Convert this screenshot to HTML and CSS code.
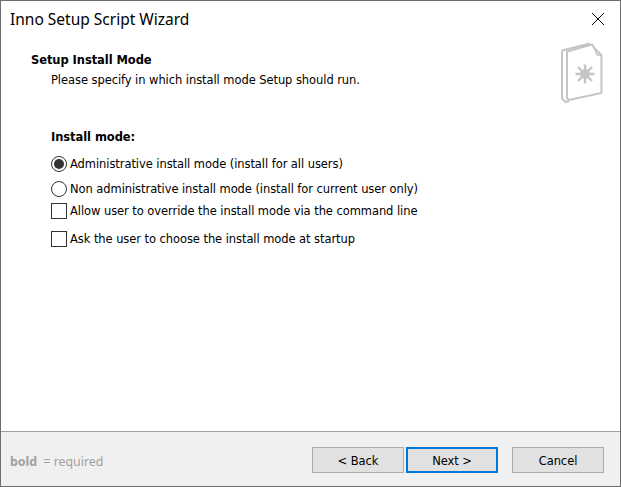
FILE: index.html
```html
<!DOCTYPE html>
<html lang="en">
<head>
    <meta charset="UTF-8">
    <title>Inno Setup Script Wizard</title>
    <link rel="stylesheet" href="styles.css">
</head>
<body>
    <div class="window">
        <div class="titlebar">
            <span class="title">Inno Setup Script Wizard</span>
            <svg class="close" width="14" height="14" viewBox="0 0 14 14"><path d="M1 1L13 13M13 1L1 13" stroke="#000" stroke-width="1" fill="none"/></svg>
        </div>

        <div class="header">
            <div class="header-text">
                <h1>Setup Install Mode</h1>
                <p>Please specify in which install mode Setup should run.</p>
            </div>
            <svg class="logo" width="42" height="62" viewBox="0 0 42 62" fill="none" stroke="#c4c4c4" stroke-width="2">
                <path d="M1 9.500V57.500L4.500 61L8 60"/>
                <path d="M1 9.500L29 2.500"/>
                <path d="M6 10.500L31 3.500L34 8L40.500 14V52L8 59L6 57Z"/>
                <path d="M34 8L36 14H40.500" stroke-width="1.500"/>
                <path d="M24 23.500V42.500M14.500 33H33.500M17 26L31 40M31 26L17 40" stroke-width="2.400"/>
                <circle cx="24" cy="33" r="5" fill="#c4c4c4" stroke="none"/>
            </svg>
        </div>

        <div class="content">
            <div class="group-label">Install mode:</div>
            <label class="opt opt-first"><span class="radio checked"></span>Administrative install mode (install for all users)</label>
            <label class="opt"><span class="radio"></span>Non administrative install mode (install for current user only)</label>
            <label class="opt opt-tight"><span class="check"></span>Allow user to override the install mode via the command line</label>
            <label class="opt opt-check"><span class="check"></span>Ask the user to choose the install mode at startup</label>
        </div>

        <div class="footer">
            <div class="legend"><b>bold</b> = required</div>
            <div class="buttons">
                <button class="btn">&lt; Back</button>
                <button class="btn btn-default">Next &gt;</button>
                <button class="btn btn-cancel">Cancel</button>
            </div>
        </div>
    </div>
</body>
</html>
```

FILE: styles.css
```css
html, body { margin: 0; height: 100%; }
body { font-family: "DejaVu Sans", sans-serif; font-size: 11.5px; letter-spacing: -0.07px; color: #000; background: #fff; overflow: hidden; }
.window { box-sizing: border-box; height: 487px; width: 621px; border: 1px solid #6e6e6e; display: flex; flex-direction: column; }
.titlebar { height: 31px; display: flex; align-items: center; justify-content: space-between; padding: 5px 15px 0 9px; box-sizing: border-box; flex: none; }
.title { font-family: "Noto Sans", sans-serif; font-size: 15.5px; letter-spacing: 0; color: #000; }
.close { display: block; }
.header { display: flex; justify-content: space-between; height: 52px; padding: 0 17px 0 30px; flex: none; }
.header-text { padding-top: 20px; }
h1 { margin: 0; font-size: 11.5px; font-weight: bold; line-height: 16px; }
.header p { margin: 4px 0 0 20px; line-height: 16px; }
.logo { margin-top: 9px; }
.content { flex: 1; padding: 45px 0 0 50px; }
.group-label { font-weight: bold; line-height: 16px; }
.opt { display: flex; align-items: center; height: 16px; }
.opt-first { margin-top: 11px; }
.opt + .opt { margin-top: 9px; }
.opt + .opt-tight { margin-top: 6px; }
.opt + .opt-check { margin-top: 12px; }
.radio { width: 16px; height: 16px; border: 1px solid #333; border-radius: 50%; box-sizing: border-box; margin-right: 3px; flex: none; position: relative; }
.radio.checked::after { content: ""; position: absolute; left: 2px; top: 2px; width: 10px; height: 10px; border-radius: 50%; background: #333; }
.check { width: 16px; height: 16px; border: 1px solid #333; box-sizing: border-box; margin-right: 3px; flex: none; background: #fff; }
.footer { flex: none; height: 55px; box-sizing: border-box; border-top: 1px solid #a0a0a0; background: #f0f0f0; display: flex; align-items: center; justify-content: space-between; padding: 2px 16px 0 9px; }
.legend { color: #a0a0a0; font-size: 12.4px; letter-spacing: 0; font-family: "Noto Sans", sans-serif; padding-top: 2px; }
.legend b { margin-right: 3px; }
.buttons { display: flex; }
.btn { width: 92px; height: 26px; box-sizing: border-box; font-family: "DejaVu Sans", sans-serif; font-size: 11.5px; letter-spacing: -0.07px; color: #000; background: #e1e1e1; border: 1px solid #adadad; padding: 2px 0 0; }
.btn-default { margin-left: 2px; border: 2px solid #0078d7; }
.btn-cancel { margin-left: 14px; }
```
